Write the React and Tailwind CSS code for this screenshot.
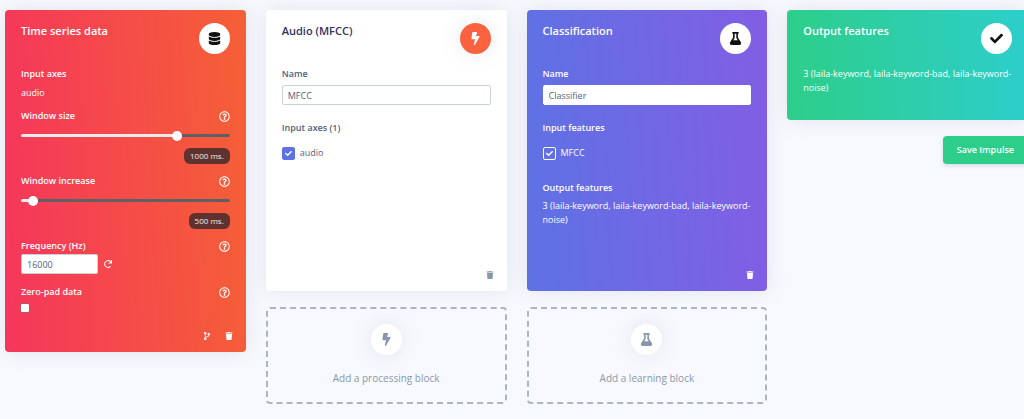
import React, { useState } from "react";
import {
  FaBolt,
  FaCheck,
  FaCodeBranch,
  FaDatabase,
  FaFlask,
  FaRedo,
  FaRegQuestionCircle,
  FaTrash,
} from "react-icons/fa";

const OUTPUT_LABELS = ["laila-keyword", "laila-keyword-bad", "laila-keyword-noise"];
const outputText = `${OUTPUT_LABELS.length} (${OUTPUT_LABELS.join(", ")})`;

function Card({ title, icon, iconClass, titleClass, className, children }) {
  return (
    <section
      className={`flex flex-col rounded px-4 pt-[13px] pb-3 shadow-[0_0_20px_rgba(136,152,170,0.2)] ${className}`}
    >
      <div className="flex items-start justify-between mb-3">
        <h2 className={`text-[11px] leading-4 font-semibold ${titleClass}`}>{title}</h2>
        <span
          className={`flex items-center justify-center w-[31px] h-[31px] rounded-full text-[13px] ${iconClass}`}
        >
          {icon}
        </span>
      </div>
      {children}
    </section>
  );
}

function HelpButton({ about }) {
  return (
    <button type="button" aria-label={`Help: ${about}`} className="text-[11px] cursor-pointer">
      <FaRegQuestionCircle />
    </button>
  );
}

function RangeField({ id, label, min, max, initial }) {
  const [value, setValue] = useState(initial);
  const percent = ((value - min) / (max - min)) * 100;

  return (
    <div className="mb-[9px]">
      <div className="flex items-center justify-between h-4">
        <label htmlFor={id} className="font-semibold">
          {label}
        </label>
        <HelpButton about={label} />
      </div>
      <input
        id={id}
        type="range"
        min={min}
        max={max}
        value={value}
        onChange={(e) => setValue(Number(e.target.value))}
        style={{
          backgroundImage: `linear-gradient(to right, #e9ecef ${percent}%, #5e6066 ${percent}%)`,
        }}
        className="block w-full h-[3px] mt-2.5 mb-[11px] appearance-none rounded-full cursor-pointer [&::-webkit-slider-thumb]:appearance-none [&::-webkit-slider-thumb]:w-2.5 [&::-webkit-slider-thumb]:h-2.5 [&::-webkit-slider-thumb]:rounded-full [&::-webkit-slider-thumb]:bg-white"
      />
      <div className="flex justify-end">
        <output
          htmlFor={id}
          className="h-4 px-1.5 rounded-md bg-[#5f322f] text-[8px] leading-4 text-white/90"
        >
          {value} ms.
        </output>
      </div>
    </div>
  );
}

function NameField({ id, value, className }) {
  return (
    <div>
      <label htmlFor={id} className="block font-semibold">
        Name
      </label>
      <input
        id={id}
        type="text"
        defaultValue={value}
        className={`block w-full h-5 mt-[3px] px-[5px] rounded-xs border bg-white text-[#525f7f] ${className}`}
      />
    </div>
  );
}

function CheckField({ id, label, boxClass }) {
  return (
    <div className="flex items-center gap-[5px] mt-[9px] h-4">
      <span className="relative flex">
        <input
          id={id}
          type="checkbox"
          defaultChecked
          className={`peer w-[13px] h-[13px] appearance-none rounded-xs border cursor-pointer ${boxClass}`}
        />
        <FaCheck className="absolute inset-0 m-auto text-[7px] text-white pointer-events-none hidden peer-checked:block" />
      </span>
      <label htmlFor={id}>{label}</label>
    </div>
  );
}

function DeleteButton({ about }) {
  return (
    <button type="button" aria-label={`Delete ${about}`} className="cursor-pointer">
      <FaTrash className="text-[8px]" />
    </button>
  );
}

function AddBlock({ icon, children }) {
  return (
    <button
      type="button"
      className="flex flex-col items-center w-full mt-4 pt-[15px] pb-4 rounded border-2 border-dashed border-[#adb5bd] text-[#8898aa] cursor-pointer"
    >
      <span className="flex items-center justify-center w-[31px] h-[31px] rounded-full bg-white text-[13px] shadow-[0_0_20px_rgba(136,152,170,0.2)]">
        {icon}
      </span>
      <span className="mt-[15px] text-[10px] leading-4">{children}</span>
    </button>
  );
}

export default function App() {
  return (
    <main className="min-h-screen overflow-hidden bg-[#f8f9fe] pt-2.5 pb-4 font-['Open_Sans',sans-serif] text-[9px] leading-4">
      <div className="grid grid-cols-4 items-start gap-5 ml-[5px] -mr-1">
        {/* Input */}
        <Card
          title="Time series data"
          icon={<FaDatabase />}
          iconClass="bg-white text-[#111]"
          titleClass="text-white"
          className="bg-linear-[87deg,#f5365c,#f56036] text-white"
        >
          <h3 className="font-semibold">Input axes</h3>
          <p className="mt-[3px] mb-[7px]">audio</p>
          <RangeField id="window-size" label="Window size" min={20} max={1310} initial={1000} />
          <RangeField id="window-increase" label="Window increase" min={40} max={13000} initial={500} />

          <div className="flex items-center justify-between h-4">
            <label htmlFor="frequency" className="font-semibold">
              Frequency (Hz)
            </label>
            <HelpButton about="Frequency" />
          </div>
          <div className="flex items-center gap-1.5">
            <input
              id="frequency"
              type="text"
              defaultValue="16000"
              className="w-[77px] h-5 px-[5px] rounded-xs border border-[#cad1d7] bg-white text-[#525f7f]"
            />
            <button type="button" aria-label="Reset frequency" className="cursor-pointer">
              <FaRedo className="text-[8px]" />
            </button>
          </div>

          <div className="flex items-center justify-between h-4 mt-2.5">
            <label htmlFor="zero-pad" className="font-semibold">
              Zero-pad data
            </label>
            <HelpButton about="Zero-pad data" />
          </div>
          <input
            id="zero-pad"
            type="checkbox"
            className="w-2 h-2 mt-1 appearance-none rounded-[1px] bg-white outline outline-[#767676]/50 checked:bg-[#5e72e4]"
          />

          <div className="flex justify-end gap-3.5 mt-4 pt-1 -mr-[3px]">
            <button type="button" aria-label="Versions" className="cursor-pointer">
              <FaCodeBranch className="text-[8px]" />
            </button>
            <DeleteButton about="input block" />
          </div>
        </Card>

        {/* Processing */}
        <div>
          <Card
            title="Audio (MFCC)"
            icon={<FaBolt />}
            iconClass="bg-[#fb6340] text-white shadow-[0_0_20px_rgba(136,152,170,0.2)]"
            titleClass="text-[#32325d]"
            className="min-h-[281px] bg-white text-[#525f7f]"
          >
            <NameField id="dsp-name" value="MFCC" className="border-[#cad1d7]" />
            <h3 className="mt-[15px] font-semibold">Input axes (1)</h3>
            <CheckField id="dsp-audio" label="audio" boxClass="border-[#5e72e4] bg-[#5e72e4]" />
            <div className="flex justify-end mt-auto -mr-[3px] text-[#8898aa]">
              <DeleteButton about="processing block" />
            </div>
          </Card>
          <AddBlock icon={<FaBolt />}>Add a processing block</AddBlock>
        </div>

        {/* Learning */}
        <div>
          <Card
            title="Classification"
            icon={<FaFlask />}
            iconClass="bg-white text-[#111]"
            titleClass="text-white"
            className="min-h-[281px] bg-linear-[87deg,#5e72e4,#825ee4] text-white"
          >
            <NameField id="learn-name" value="Classifier" className="border-white" />
            <h3 className="mt-[15px] font-semibold">Input features</h3>
            <CheckField id="learn-mfcc" label="MFCC" boxClass="border-white bg-transparent" />
            <h3 className="mt-[19px] font-semibold">Output features</h3>
            <p className="mt-[3px] leading-[14px]">{outputText}</p>
            <div className="flex justify-end mt-auto -mr-[3px]">
              <DeleteButton about="learning block" />
            </div>
          </Card>
          <AddBlock icon={<FaFlask />}>Add a learning block</AddBlock>
        </div>

        {/* Output */}
        <div>
          <Card
            title="Output features"
            icon={<FaCheck />}
            iconClass="bg-white text-[#111]"
            titleClass="text-white"
            className="bg-linear-[87deg,#2dce89,#2dcecc] text-white"
          >
            <p className="mt-px mb-[13px] leading-[14px]">{outputText}</p>
          </Card>
          <div className="flex justify-end mt-4">
            <button
              type="button"
              className="h-7 px-3.5 rounded bg-[#2dce89] font-semibold text-white shadow-[0_2px_4px_rgba(50,50,93,0.15)] cursor-pointer"
            >
              Save Impulse
            </button>
          </div>
        </div>
      </div>
    </main>
  );
}
